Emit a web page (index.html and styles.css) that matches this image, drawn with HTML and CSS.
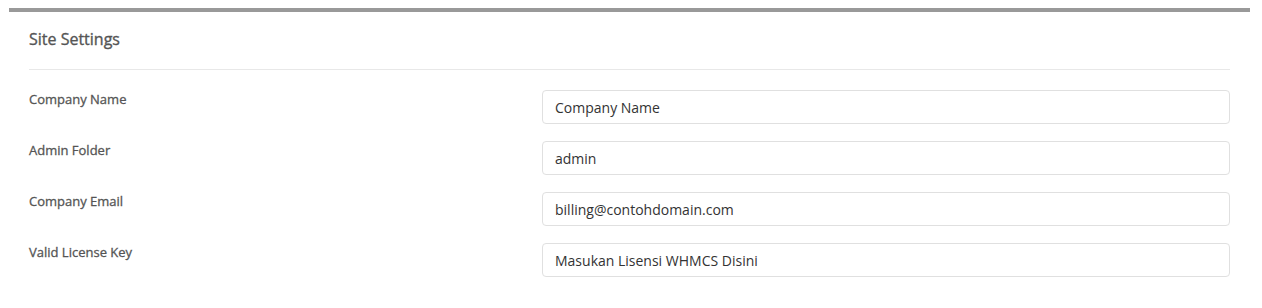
FILE: index.html
```html
<!DOCTYPE html>
<html lang="en">
<head>
    <meta charset="UTF-8">
    <meta name="viewport" content="width=device-width, initial-scale=1.0">
    <title>Site Settings</title>

    <!-- styling -->
    <link rel="stylesheet" href="styles.css">
</head>
<body>
    <div class="panel">
        <h3 class="panel-title">Site Settings</h3>

        <form class="settings-form" action="">
            <label class="field-label" for="company-name">Company Name</label>
            <input type="text" id="company-name" class="field-input" value="Company Name">

            <label class="field-label" for="admin-folder">Admin Folder</label>
            <input type="text" id="admin-folder" class="field-input" value="admin">

            <label class="field-label" for="company-email">Company Email</label>
            <input type="email" id="company-email" class="field-input" value="billing@contohdomain.com">

            <label class="field-label" for="license-key">Valid License Key</label>
            <input type="text" id="license-key" class="field-input" value="Masukan Lisensi WHMCS Disini">
        </form>
    </div>
</body>
</html>
```

FILE: styles.css
```css
body {
    margin: 8px 12px 0 9px;
    background-color: #ffffff;
    font-family: 'Open Sans', 'Noto Sans', sans-serif;
}

.panel {
    background-color: #ffffff;
    border-top: 4px solid #999999;
    padding: 0 20px 30px 20px;
}

.panel-title {
    margin: 0;
    padding: 16px 0 19px 0;
    font-size: 16px;
    font-weight: 400;
    line-height: 22px;
    color: #555555;
    -webkit-text-stroke: 0.35px #555555;
    border-bottom: 1px solid #e8e8e8;
}

.settings-form {
    display: grid;
    grid-template-columns: 513px 1fr;
    row-gap: 17px;
    padding-top: 20px;
}

.field-label {
    font-size: 13px;
    font-weight: 400;
    line-height: 18px;
    color: #555555;
    -webkit-text-stroke: 0.3px #555555;
}

.field-input {
    box-sizing: border-box;
    height: 34px;
    width: 100%;
    padding: 0 12px;
    border: 1px solid #e0e0e0;
    border-radius: 4px;
    font-family: 'Open Sans', 'Noto Sans', sans-serif;
    font-size: 14px;
    color: #333333;
    background-color: #ffffff;
}

.field-input:focus {
    border-color: #66afe9;
    outline: none;
}
```
